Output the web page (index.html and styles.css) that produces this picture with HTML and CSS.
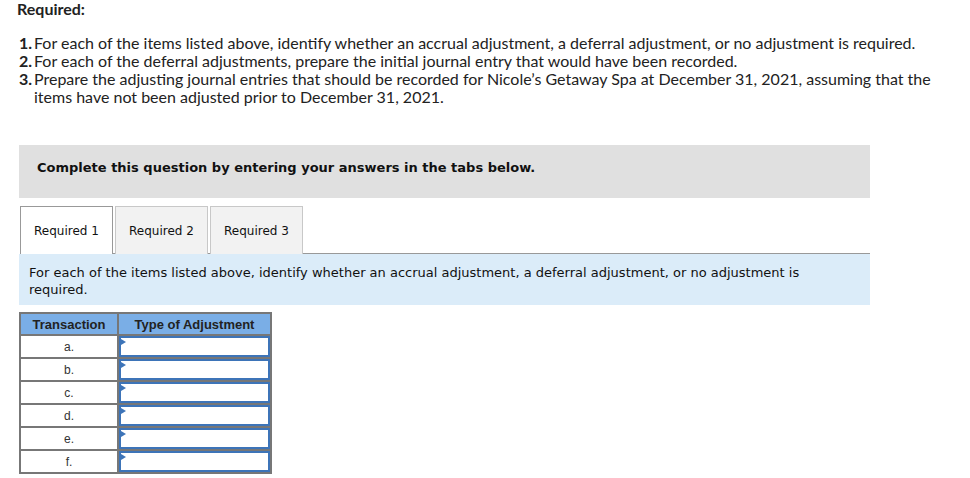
FILE: index.html
```html
<!DOCTYPE html>
<html>
<head>
<meta charset="utf-8">
<link rel="stylesheet" href="styles.css">
</head>
<body>
<div class="page">
  <div class="req-title">Required:</div>
  <ol class="req-list">
    <li><span class="num">1.</span><span>For each of the items listed above, identify whether an accrual adjustment, a deferral adjustment, or no adjustment is required.</span></li>
    <li><span class="num">2.</span><span>For each of the deferral adjustments, prepare the initial journal entry that would have been recorded.</span></li>
    <li><span class="num">3.</span><span>Prepare the adjusting journal entries that should be recorded for Nicole’s Getaway Spa at December 31, 2021, assuming that the items have not been adjusted prior to December 31, 2021.</span></li>
  </ol>

  <div class="complete-box">Complete this question by entering your answers in the tabs below.</div>

  <div class="tabs">
    <div class="tab active">Required 1</div>
    <div class="tab">Required 2</div>
    <div class="tab">Required 3</div>
  </div>
  <div class="instr">For each of the items listed above, identify whether an accrual adjustment, a deferral adjustment, or no adjustment is required.</div>

  <table class="adj">
    <thead>
      <tr><th class="c1">Transaction</th><th class="c2">Type of Adjustment</th></tr>
    </thead>
    <tbody>
      <tr><td class="c1">a.</td><td class="inp"><div class="field"></div></td></tr>
      <tr><td class="c1">b.</td><td class="inp"><div class="field"></div></td></tr>
      <tr><td class="c1">c.</td><td class="inp"><div class="field"></div></td></tr>
      <tr><td class="c1">d.</td><td class="inp"><div class="field"></div></td></tr>
      <tr><td class="c1">e.</td><td class="inp"><div class="field"></div></td></tr>
      <tr><td class="c1">f.</td><td class="inp"><div class="field"></div></td></tr>
    </tbody>
  </table>
</div>
</body>
</html>
```
FILE: styles.css
```css
html, body {
  margin: 0;
  padding: 0;
  background: #fff;
}
.page {
  padding: 0;
  color: #222;
  font-family: "Lato", "Liberation Sans", sans-serif;
}
.req-title {
  margin: 0 0 0 17px;
  font-size: 16px;
  font-weight: bold;
  line-height: 18px;
}
.req-list {
  list-style: none;
  margin: 16px 0 0 0;
  padding: 0 0 0 19px;
  font-size: 16px;
  line-height: 18px;
  width: 915px;
}
.req-list li {
  display: flex;
}
.req-list .num {
  font-weight: bold;
  width: 15px;
  flex: none;
}
.complete-box {
  margin: 39px 0 0 19px;
  width: 851px;
  height: 53px;
  box-sizing: border-box;
  background: #e0e0e0;
  padding: 14px 0 0 18px;
  font-family: "DejaVu Sans", Verdana, sans-serif;
  font-weight: bold;
  font-size: 13px;
  line-height: 17px;
  color: #111;
}
.tabs {
  display: flex;
  gap: 2px;
  margin: 8px 0 0 20px;
  height: 48px;
  width: 850px;
  box-sizing: border-box;
  border-bottom: 1px solid #999;
}
.tab {
  width: 93px;
  height: 48px;
  box-sizing: border-box;
  border: 1px solid #c8c8c8;
  border-bottom: none;
  background: #f2f2f2;
  display: flex;
  align-items: center;
  justify-content: center;
  font-family: "DejaVu Sans", Verdana, sans-serif;
  font-size: 12px;
  color: #111;
}
.tab.active {
  background: #fff;
  border-color: #999;
  position: relative;
  z-index: 1;
}
.instr {
  margin: 0 0 0 19px;
  width: 851px;
  height: 51px;
  box-sizing: border-box;
  background: #dbecf9;
  padding: 10px 60px 0 10px;
  font-family: "DejaVu Sans", Verdana, sans-serif;
  font-size: 13px;
  line-height: 17px;
  color: #111;
}
.adj {
  margin: 7px 0 0 19px;
  border-collapse: collapse;
  font-family: "Liberation Sans", Arial, sans-serif;
}
.adj th {
  background: #7aaee6;
  border: 2px solid #777;
  height: 20px;
  padding: 0;
  font-size: 13px;
  font-weight: bold;
  color: #222;
}
.adj .c1 {
  width: 96px;
}
.adj th.c2 {
  width: 151px;
}
.adj td {
  border: 2px solid #777;
  padding: 0;
  height: 21px;
  font-size: 12px;
  text-align: center;
  color: #333;
}
.adj td.inp {
  padding: 0;
  vertical-align: top;
}
.field {
  position: relative;
  height: 21px;
  box-sizing: border-box;
  border: 2px solid #3d74b8;
  background: #fff;
}
.field::before {
  content: "";
  position: absolute;
  left: 0;
  top: 1px;
  border-left: 5px solid #3d74b8;
  border-top: 3px solid transparent;
  border-bottom: 3px solid transparent;
}
```
